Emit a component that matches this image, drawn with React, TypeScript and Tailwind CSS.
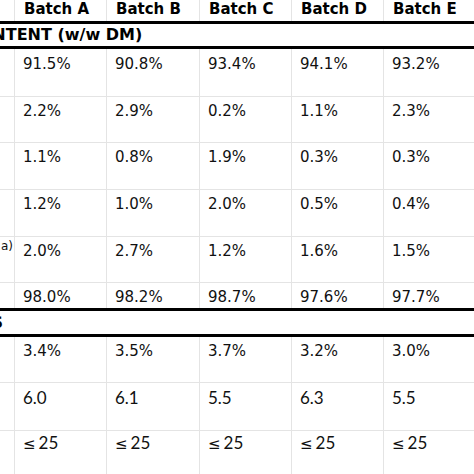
type Row = {
  label: string;
  sup?: string;
  values: string[];
  rowClass: string;
  cellClass: string;
  last?: boolean;
};

const rows: Row[] = [
  { label: "Protein", values: ["91.5%", "90.8%", "93.4%", "94.1%", "93.2%"], rowClass: "h-[48px]", cellClass: "pt-[6px]" },
  { label: "Fat", values: ["2.2%", "2.9%", "0.2%", "1.1%", "2.3%"], rowClass: "h-[46px]", cellClass: "pt-[5px]" },
  { label: "Ash", values: ["1.1%", "0.8%", "1.9%", "0.3%", "0.3%"], rowClass: "h-[47px]", cellClass: "pt-[5px]" },
  { label: "Lactose", values: ["1.2%", "1.0%", "2.0%", "0.5%", "0.4%"], rowClass: "h-[47px]", cellClass: "pt-[5px]" },
  { label: "Other carbohydrates", sup: "a)", values: ["2.0%", "2.7%", "1.2%", "1.6%", "1.5%"], rowClass: "h-[46px]", cellClass: "pt-[5px]" },
  { label: "Total", values: ["98.0%", "98.2%", "98.7%", "97.6%", "97.7%"], rowClass: "h-[25px]", cellClass: "pt-[5px]", last: true },
];

const rows2: Row[] = [
  { label: "Moisture", values: ["3.4%", "3.5%", "3.7%", "3.2%", "3.0%"], rowClass: "h-[46px]", cellClass: "pt-[5px]" },
  { label: "pH", values: ["6.0", "6.1", "5.5", "6.3", "5.5"], rowClass: "h-[48px] font-['Lato',sans-serif] text-[17px]", cellClass: "pt-[5px] leading-[20px]" },
  { label: "Particle size", values: ["25", "25", "25", "25", "25"], rowClass: "h-[48px] font-['Lato',sans-serif] text-[17px]", cellClass: "pt-[2px] leading-[20px]", last: true },
];

const widths = ["w-[92px]", "w-[93px]", "w-[92px]", "w-[92px]", "w-[92px]"];

function DataRow({ row, le }: { row: Row; le?: boolean }) {
  return (
    <div className={`flex ${row.rowClass} ${row.last ? "" : "border-b border-[#e4e4e4]"}`}>
      {row.sup ? (
        <div className={`w-[200px] shrink-0 text-right pr-[1px] whitespace-nowrap ${row.cellClass}`}>
          {row.label}
          <sup className="text-[12px] ml-[2px]">{row.sup}</sup>
        </div>
      ) : (
        <div className={`w-[200px] shrink-0 pl-2 ${row.cellClass}`}>{row.label}</div>
      )}
      {row.values.map((v, i) => (
        <div key={i} className={`${widths[i]} shrink-0 border-l border-[#e4e4e4] pl-2 ${row.cellClass}`}>
          {le && <span className="font-['DejaVu_Sans',sans-serif] text-[15px] mr-[3px]">{"\u2264"}</span>}
          {v}
        </div>
      ))}
    </div>
  );
}

export default function App() {
  const batches = ["Batch A", "Batch B", "Batch C", "Batch D", "Batch E"];
  return (
    <div className="w-[474px] h-[474px] overflow-hidden bg-white text-[#111] font-['DejaVu_Sans',sans-serif] text-[15px] leading-[18px]">
      <div className="ml-[-186px] w-[661px]">
        <div className="flex h-[21px]">
          <div className="w-[200px] shrink-0" />
          {batches.map((b, i) => (
            <div key={b} className={`${widths[i]} shrink-0 border-l border-[#e4e4e4] pl-[9px] font-bold text-black`}>
              {b}
            </div>
          ))}
        </div>
        <div className="h-[3px] bg-black" />
        <div className="h-[22px] pt-[2px] font-bold text-black text-[16px] whitespace-nowrap">
          <div className="pl-[153px]">CONTENT (w/w DM)</div>
        </div>
        <div className="h-[3px] bg-black" />
        {rows.map((r) => (
          <DataRow key={r.label} row={r} />
        ))}
        <div className="h-[3px] bg-black" />
        <div className="h-[23px] pt-[3px] font-bold text-black text-[16px] whitespace-nowrap">
          <div className="w-[189px] flex justify-end">
            <span className="shrink-0">PHYSICAL PROPERTIES</span>
          </div>
        </div>
        <div className="h-[3px] bg-black" />
        {rows2.map((r, i) => (
          <DataRow key={r.label} row={r} le={i === 2} />
        ))}
      </div>
    </div>
  );
}
